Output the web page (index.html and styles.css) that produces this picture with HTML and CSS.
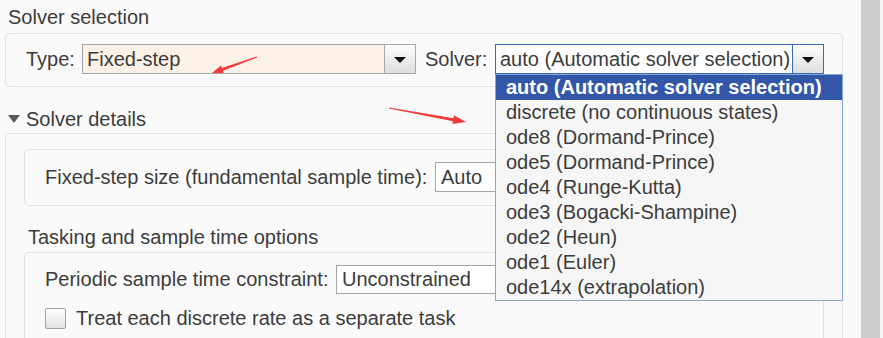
FILE: index.html
```
<!DOCTYPE html>
<html lang="en">
<head>
    <meta charset="UTF-8">
    <title>Solver configuration</title>
    <link rel="stylesheet" href="styles.css">
</head>
<body>
    <div class="window">
        <div class="content">
            <div class="section-title">Solver selection</div>

            <div class="card card-selection">
                <span class="label label-type">Type:</span>
                <div class="select select-type">
                    <span class="value">Fixed-step</span>
                    <span class="drop"><span class="tri"></span></span>
                </div>
                <span class="label label-solver">Solver:</span>
                <div class="select select-solver">
                    <span class="value">auto (Automatic solver selection)</span>
                    <span class="drop"><span class="tri"></span></span>
                    <ul class="listbox">
                        <li class="selected">auto (Automatic solver selection)</li>
                        <li>discrete (no continuous states)</li>
                        <li>ode8 (Dormand-Prince)</li>
                        <li>ode5 (Dormand-Prince)</li>
                        <li>ode4 (Runge-Kutta)</li>
                        <li>ode3 (Bogacki-Shampine)</li>
                        <li>ode2 (Heun)</li>
                        <li>ode1 (Euler)</li>
                        <li>ode14x (extrapolation)</li>
                    </ul>
                </div>
            </div>

            <div class="section-toggle"><span class="caret"></span>Solver details</div>

            <div class="card card-details">
                <div class="card inner inner-step">
                    <span class="label label-step">Fixed-step size (fundamental sample time):</span>
                    <div class="field">Auto</div>
                </div>

                <div class="sub-title">Tasking and sample time options</div>

                <div class="card inner inner-tasking">
                    <div class="row">
                        <span class="label label-periodic">Periodic sample time constraint:</span>
                        <div class="field field-select">Unconstrained</div>
                    </div>
                    <div class="check-row">
                        <span class="checkbox"></span>
                        <span>Treat each discrete rate as a separate task</span>
                    </div>
                </div>
            </div>
        </div>
        <div class="scrollbar"></div>
        <div class="edge"></div>
    </div>

    <!-- annotation arrows drawn over the dialog -->
    <svg class="marks" width="883" height="338" viewBox="0 0 883 338">
        <polygon fill="#f23a3a" points="257.2,57.5 222.9,70.7 223.7,73.1 212,73 221.1,65.5 221.9,67.9 256.8,56.5"/>
        <polygon fill="#f23a3a" points="388.9,108.5 452.9,121.2 452.4,124.1 466,122 454.0,115.3 453.5,118.2 389.1,107.5"/>
    </svg>
</body>
</html>
```

FILE: styles.css
```
html, body {
    margin: 0;
    height: 338px;
    overflow: hidden;
}

body {
    font-family: 'Liberation Sans', Arial, sans-serif;
    font-size: 20px;
    color: #3c3c3c;
    background-color: #fafafa;
    position: relative;
}

.window {
    display: flex;
    height: 338px;
}

.content {
    width: 843px;
    padding-right: 18px;
}

.scrollbar {
    width: 19px;
    background-color: #cdcdcd;
}

.edge {
    width: 3px;
    background-color: #f4f4f4;
}

.section-title {
    height: 33px;
    line-height: 34px;
    padding-left: 8px;
}

.card {
    border: 1px solid #e2e2e2;
    border-radius: 5px;
    background-color: #fafafa;
}

.card-selection {
    margin-left: 5px;
    height: 54px;
    box-sizing: border-box;
    padding: 10px 18px 12px 20px;
    display: flex;
    align-items: center;
}

.label {
    flex: none;
    white-space: nowrap;
}

.label-type {
    width: 56px;
}

.label-solver {
    width: 70px;
    margin-left: 9px;
}

.select {
    height: 30px;
    box-sizing: border-box;
    border: 1px solid #a6a6a6;
    display: flex;
    line-height: 28px;
    position: relative;
    flex: none;
}

.select .value {
    flex: 1;
    padding-left: 4px;
    white-space: nowrap;
}

.select .drop {
    width: 30px;
    border-left: 1px solid #a6a6a6;
    background: linear-gradient(#fdfdfd, #dedede);
    display: flex;
    align-items: center;
    justify-content: center;
}

.tri {
    width: 0;
    height: 0;
    border-left: 6px solid transparent;
    border-right: 6px solid transparent;
    border-top: 6px solid #111;
    margin-top: 2px;
}

.select-type {
    width: 334px;
    background-color: #fcf1e6;
}

.select-solver {
    width: 329px;
    background-color: #fff;
    border-color: #3c6cb4;
}

.select-solver .drop {
    border-left-color: #3c6cb4;
}

.listbox {
    position: absolute;
    top: 29px;
    left: -1px;
    width: 348px;
    box-sizing: border-box;
    margin: 0;
    padding: 0;
    list-style: none;
    border: 1px solid #86a9d4;
    background-color: #f6f6f6;
    z-index: 5;
}

.listbox li {
    height: 25px;
    line-height: 25px;
    padding-left: 10px;
    white-space: nowrap;
}

.listbox li.selected {
    background-color: #3456a8;
    color: #fff;
    font-weight: bold;
}

.section-toggle {
    height: 46px;
    box-sizing: border-box;
    padding-top: 20px;
    line-height: 24px;
    display: flex;
    align-items: flex-start;
}

.caret {
    width: 0;
    height: 0;
    border-left: 6px solid transparent;
    border-right: 6px solid transparent;
    border-top: 8px solid #5a5a5a;
    margin: 8px 6px 0 8px;
}

.card-details {
    margin-left: 5px;
    padding: 15px 18px 0 18px;
    height: 260px;
    border-bottom: none;
    border-radius: 5px 5px 0 0;
}

.inner {
    padding: 12px 20px 13px 20px;
}

.inner-step {
    display: flex;
    align-items: center;
}

.label-step {
    width: 390px;
}

.field {
    height: 30px;
    box-sizing: border-box;
    border: 1px solid #a6a6a6;
    background-color: #fff;
    line-height: 28px;
    padding-left: 5px;
    width: 260px;
}

.sub-title {
    height: 46px;
    box-sizing: border-box;
    padding: 19px 0 0 4px;
    line-height: 24px;
}

.inner-tasking {
    height: 120px;
    border-bottom: none;
    border-radius: 5px 5px 0 0;
}

.row {
    display: flex;
    align-items: center;
}

.label-periodic {
    width: 291px;
}

.field-select {
    width: 340px;
    height: 29px;
    line-height: 27px;
}

.check-row {
    display: flex;
    align-items: center;
    margin-top: 13px;
}

.checkbox {
    width: 21px;
    height: 21px;
    box-sizing: border-box;
    border: 1px solid #a3a3a3;
    border-radius: 2px;
    background: linear-gradient(#fefefe, #e2e2e2);
    margin-right: 10px;
}

.marks {
    position: absolute;
    top: 0;
    left: 0;
    pointer-events: none;
}
```
